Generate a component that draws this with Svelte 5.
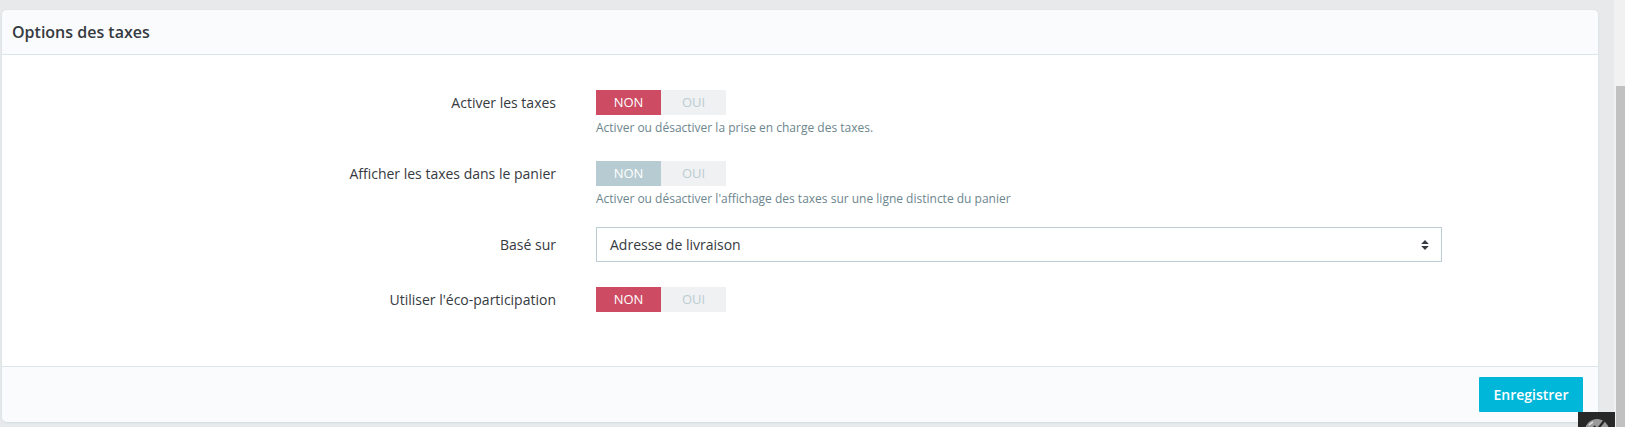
<script>
  const rows = [
    { label: 'Activer les taxes', on: true, help: 'Activer ou désactiver la prise en charge des taxes.' },
    { label: 'Afficher les taxes dans le panier', on: false, help: "Activer ou désactiver l'affichage des taxes sur une ligne distincte du panier" }
  ];
</script>

<div class="page">
  <main class="content">
    <section class="card">
      <header class="head">Options des taxes</header>
      <div class="body">
        {#each rows as r, i}
          <div class="row" class:last={i === 1}>
            <div class="label">{r.label}</div>
            <div class="field">
              <div class="toggle">
                <span class="non" class:muted={!r.on}>NON</span><span class="oui">OUI</span>
              </div>
              <p class="help">{r.help}</p>
            </div>
          </div>
        {/each}
        <div class="row sel">
          <div class="label">Basé sur</div>
          <div class="field">
            <div class="select">
              <span>Adresse de livraison</span>
              <svg width="8" height="10" viewBox="0 0 8 10"><path d="M4 0 7.8 4H.2zM4 10 .2 6h7.6z" fill="#363a41"/></svg>
            </div>
          </div>
        </div>
        <div class="row">
          <div class="label">Utiliser l'éco-participation</div>
          <div class="field">
            <div class="toggle"><span class="non">NON</span><span class="oui">OUI</span></div>
          </div>
        </div>
      </div>
      <footer class="foot"><button>Enregistrer</button></footer>
    </section>
  </main>
  <div class="scroll"><div class="thumb"></div></div>
  <div class="badge">
    <svg width="24" height="24" viewBox="0 0 24 24">
      <circle cx="12" cy="12" r="12" fill="#9a9a9a"/>
      <path d="M9 7 12 11 19 2" fill="none" stroke="#282828" stroke-width="2.2"/>
      <path d="M4 6 8 3" fill="none" stroke="#e4e4e4" stroke-width="1.5"/>
    </svg>
  </div>
</div>

<style>
  :global(body) { margin: 0; }
  .page { display: flex; width: 1625px; height: 427px; overflow: hidden; position: relative; background: #e8e9ea; font-family: "Open Sans", sans-serif; color: #363a41; }
  .content { width: 1614px; padding: 10px 16px 0 2px; box-sizing: border-box; }
  .card { background: #fff; border-radius: 5px; box-shadow: 0 0 2px #d3e0e3, 0 1px 2px #d3e0e3; }
  .head { height: 44px; line-height: 44px; padding-left: 10px; font-size: 16px; font-weight: 600; background: #fafbfc; border-bottom: 1px solid #dbe6e9; border-radius: 5px 5px 0 0; }
  .body { height: 311px; box-sizing: border-box; padding-top: 35px; }
  .row { display: flex; min-height: 71px; }
  .row.last { min-height: 66px; }
  .row.sel { min-height: 60px; }
  .label { width: 554px; text-align: right; font-size: 14px; line-height: 25px; flex: none; }
  .row.sel .label { line-height: 36px; }
  .field { margin-left: 40px; flex: 1; }
  .toggle { display: flex; width: 130px; height: 25px; font-size: 13px; line-height: 25px; text-align: center; }
  .non { width: 65px; background: #cd4b63; color: #fff; }
  .non.muted { background: #b7ccd2; }
  .oui { width: 65px; background: #eff1f2; color: #bbcdd2; }
  .help { margin: 4px 0 0; font-size: 12px; line-height: 18px; color: #6c868e; }
  .select { width: 846px; height: 35px; box-sizing: border-box; border: 1px solid #bbcdd2; padding: 0 12px 0 13px; display: flex; align-items: center; justify-content: space-between; font-size: 14px; }
  .foot { height: 56px; box-sizing: border-box; background: #fafbfc; border-top: 1px solid #dbe6e9; padding: 10px 15px 0 0; display: flex; justify-content: flex-end; border-radius: 0 0 5px 5px; }
  button { width: 104px; height: 35px; border: 0; border-radius: 1px; background: #00b7da; color: #fff; font: 600 14px "Open Sans", sans-serif; padding: 0; }
  .scroll { width: 11px; background: #f1f1f1; padding-top: 86px; padding-left: 2px; box-sizing: border-box; }
  .thumb { height: 100%; background: #c1c1c1; }
  .badge { position: absolute; left: 1578px; top: 412px; width: 37px; height: 15px; background: #282828; display: flex; justify-content: center; padding-top: 7px; box-sizing: border-box; overflow: hidden; }
  .badge svg { flex: none; }
</style>
